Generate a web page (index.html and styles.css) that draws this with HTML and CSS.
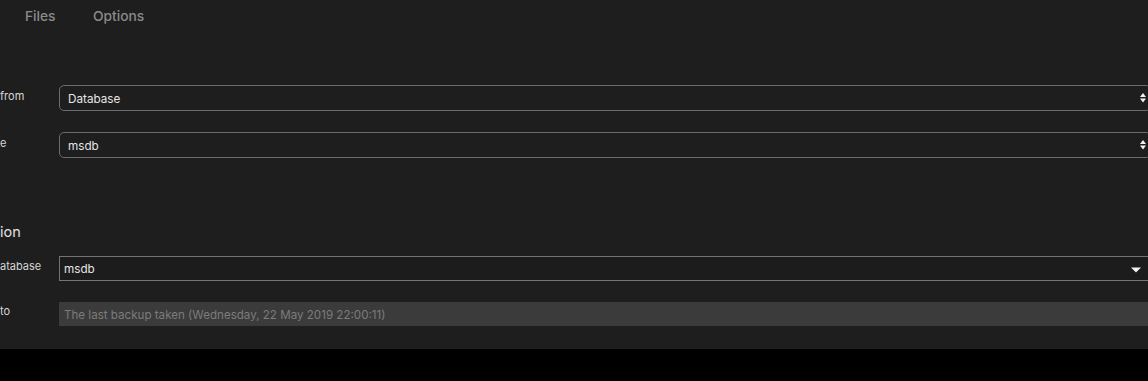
FILE: index.html
```html
<!DOCTYPE html>
<html>
<head>
<meta charset="utf-8">
<link rel="stylesheet" href="styles.css">
</head>
<body>
<div class="panel">
  <div class="tabs">
    <span class="tab">Files</span>
    <span class="tab">Options</span>
  </div>
  <div class="form">
    <div class="row first">
      <span class="label">from</span>
      <div class="select round">
        <span class="value">Database</span>
        <svg class="updown" width="6" height="10" viewBox="0 0 6 10"><path d="M3 0L6 4H0Z M0 5.5H6L3 9.5Z" fill="#f2f2f2"/></svg>
      </div>
    </div>
    <div class="row second">
      <span class="label">e</span>
      <div class="select round">
        <span class="value">msdb</span>
        <svg class="updown" width="6" height="10" viewBox="0 0 6 10"><path d="M3 0L6 4H0Z M0 5.5H6L3 9.5Z" fill="#f2f2f2"/></svg>
      </div>
    </div>
    <div class="heading">ion</div>
    <div class="row third">
      <span class="label">atabase</span>
      <div class="select square">
        <span class="value">msdb</span>
        <svg class="caret" width="10" height="6" viewBox="0 0 10 6"><path d="M0 0.5H10L5 5.5Z" fill="#f2f2f2"/></svg>
      </div>
    </div>
    <div class="row fourth">
      <span class="label">to</span>
      <div class="input disabled">
        <span class="value">The last backup taken (Wednesday, 22 May 2019 22:00:11)</span>
      </div>
    </div>
  </div>
</div>
</body>
</html>
```
FILE: styles.css
```css
html, body {
  margin: 0;
  padding: 0;
  background: #000;
  overflow: hidden;
  font-family: Inter, "Noto Sans", "Liberation Sans", sans-serif;
}

.panel {
  background: #1e1e1e;
  height: 349px;
  box-sizing: border-box;
}

.tabs {
  display: flex;
  align-items: center;
  gap: 37.5px;
  height: 31px;
  padding-left: 25px;
}

.tab {
  font-size: 13.75px;
  font-weight: 500;
  color: #8a8a8a;
}

.form {
  margin-top: 1px;
  margin-right: -3px;
  display: flex;
  flex-direction: column;
}

.row {
  display: grid;
  grid-template-columns: 59px 1fr;
  align-items: start;
}

.row.first { margin-top: 53px; }
.row.second { margin-top: 21px; }
.row.third { margin-top: 14px; }
.row.fourth { margin-top: 21px; }

.label {
  font-size: 11px;
  line-height: 14px;
  color: #d6d6d6;
  padding-top: 4px;
}

.third .label { padding-top: 3px; }
.fourth .label { padding-top: 2px; }

.heading {
  margin-top: 64px;
  font-size: 14.5px;
  line-height: 20px;
  color: #e2e2e2;
}

.select, .input {
  position: relative;
  display: flex;
  align-items: center;
  box-sizing: border-box;
  font-size: 11.7px;
  color: #e6e6e6;
}

.value {
  padding-top: 1px;
}

.select.round {
  height: 26px;
  border: 1px solid #6c6c6c;
  border-radius: 5px;
  padding-left: 8px;
  background: #1e1e1e;
}

.select.square {
  height: 25px;
  border: 1px solid #747474;
  padding-left: 4px;
  background: #1c1c1c;
}

.input.disabled {
  height: 24px;
  background: #3b3b3b;
  padding-left: 5px;
  color: #7c7c7c;
  font-size: 11.6px;
}

.updown {
  position: absolute;
  right: 4px;
  top: 7px;
}

.caret {
  position: absolute;
  right: 9px;
  top: 10px;
}
```
